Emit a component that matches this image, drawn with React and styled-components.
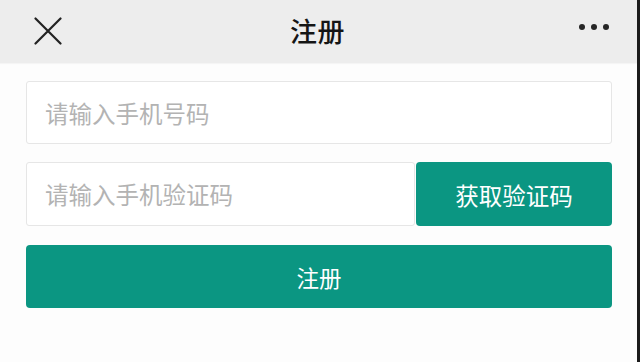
import React from 'react';
import styled, { createGlobalStyle } from 'styled-components';

const green = '#0b9682';

const GlobalStyle = createGlobalStyle`
  html, body {
    margin: 0;
    padding: 0;
    background: #fff;
  }
  body {
    font-family: "Noto Sans CJK SC", "Noto Sans", sans-serif;
  }
`;

const Page = styled.div`
  width: 640px;
  height: 362px;
  box-sizing: border-box;
  border-right: 3px solid #1c1c1c;
  background: #fdfdfd;
  overflow: hidden;
`;

const NavBar = styled.header`
  height: 63px;
  background: #ededed;
  display: flex;
  align-items: center;
  justify-content: space-between;
  padding: 0 28px 0 34px;
  box-sizing: border-box;
  box-shadow: 0 1px 1px rgba(0, 0, 0, 0.03);
`;

const IconBox = styled.div`
  width: 28px;
  height: 28px;
  display: flex;
  align-items: center;
  justify-content: center;
  margin-top: -1px;
`;

const Title = styled.h1`
  margin: 0;
  font-size: 27px;
  font-weight: 500;
  color: #151515;
  letter-spacing: 0.5px;
  margin-top: -2px;
  margin-right: 6px;
`;

const Dots = styled.div`
  display: flex;
  gap: 6px;
  margin-top: -10px;
`;

const Dot = styled.span`
  width: 6px;
  height: 6px;
  border-radius: 50%;
  background: #262626;
`;

const Form = styled.div`
  display: flex;
  flex-direction: column;
  gap: 18px;
  padding: 18px 25px 0 26px;
`;

const Row = styled.div`
  display: flex;
  gap: 1px;
  height: 64px;
`;

const Field = styled.div`
  flex: ${p => (p.$grow ? '1' : '0 0 auto')};
  height: ${p => p.$h || 63}px;
  box-sizing: border-box;
  border: 1px solid #e6e6e6;
  border-radius: 3px;
  background: #fff;
  display: flex;
  align-items: center;
  padding-left: 18px;
  font-size: 23.5px;
  color: #b3b3b3;
`;

const CodeButton = styled.button`
  width: 196px;
  height: 64px;
  border: none;
  border-radius: 4px;
  background: ${green};
  color: #fff;
  font-family: inherit;
  font-size: 23.5px;
  padding: 0;
  padding-top: 1px;
`;

const SubmitButton = styled.button`
  height: 63px;
  margin-top: 1px;
  border: none;
  border-radius: 4px;
  background: ${green};
  color: #fff;
  font-family: inherit;
  font-size: 22.5px;
  padding: 0;
`;

const CloseIcon = () => (
  <svg width="28" height="28" viewBox="0 0 28 28">
    <path d="M1.5 1.5 L26.5 26.5 M26.5 1.5 L1.5 26.5" stroke="#222" strokeWidth="2.2" strokeLinecap="round" />
  </svg>
);

export default function App() {
  return (
    <Page>
      <GlobalStyle />
      <NavBar>
        <IconBox>
          <CloseIcon />
        </IconBox>
        <Title>注册</Title>
        <Dots>
          <Dot />
          <Dot />
          <Dot />
        </Dots>
      </NavBar>
      <Form>
        <Field>请输入手机号码</Field>
        <Row>
          <Field $grow $h={64}>请输入手机验证码</Field>
          <CodeButton>获取验证码</CodeButton>
        </Row>
        <SubmitButton>注册</SubmitButton>
      </Form>
    </Page>
  );
}
